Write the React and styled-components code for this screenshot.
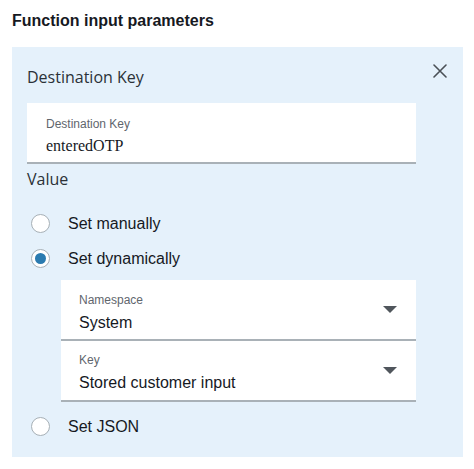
import React from "react";
import styled, { createGlobalStyle } from "styled-components";

const Global = createGlobalStyle`
  html, body { margin: 0; padding: 0; background: #ffffff; }
  body { font-family: "Liberation Sans", Arial, sans-serif; color: #16191f; }
  * { box-sizing: border-box; }
`;

const Page = styled.div`
  padding: 11px 11px 0 12px;
  width: 474px;
`;

const Title = styled.h2`
  margin: 0;
  font-family: "Liberation Sans", Arial, sans-serif;
  font-weight: 700;
  font-size: 16px;
  line-height: 19px;
  color: #16191f;
`;

const Panel = styled.section`
  margin-top: 17px;
  width: 451px;
  background: #e5f1fb;
  padding: 20px 16px 13px 15px;
  display: flex;
  flex-direction: column;
`;

const Header = styled.div`
  display: flex;
  justify-content: space-between;
  align-items: flex-start;
`;

const Heading = styled.div`
  font-family: "Open Sans", "Noto Sans", sans-serif;
  font-size: 16px;
  line-height: 20px;
  color: #2b3137;
`;

const CloseButton = styled.button`
  margin-top: -3px;
  padding: 0;
  border: 0;
  background: transparent;
  width: 14px;
  height: 14px;
  display: flex;
  cursor: pointer;
`;

const Field = styled.div`
  width: ${(p) => p.$width}px;
  height: 61px;
  background: #ffffff;
  border-bottom: 2px solid #a9b1b7;
  padding: ${(p) => p.$padTop}px 20px 0 ${(p) => p.$padLeft}px;
  margin-top: ${(p) => p.$mt || 0}px;
  position: relative;
`;

const FieldLabel = styled.div`
  font-family: "Liberation Sans", Arial, sans-serif;
  font-size: 12px;
  line-height: 14px;
  color: #5f666d;
`;

const FieldValue = styled.div`
  margin-top: ${(p) => p.$mt}px;
  font-family: ${(p) =>
    p.$serif
      ? `"Liberation Serif", "Times New Roman", serif`
      : `"Liberation Sans", Arial, sans-serif`};
  font-size: 16px;
  line-height: 19px;
  color: #16191f;
`;

const Caret = styled.svg`
  position: absolute;
  right: 19px;
  top: 50%;
  margin-top: -4px;
`;

const SectionLabel = styled(Heading)`
  margin-top: 5px;
`;

const RadioList = styled.div`
  margin-top: 17px;
  display: flex;
  flex-direction: column;
`;

const RadioRow = styled.label`
  height: 35px;
  display: flex;
  align-items: center;
  padding-left: 4px;
  margin-top: ${(p) => p.$mt || 0}px;
  font-family: "Liberation Sans", Arial, sans-serif;
  font-size: 16px;
  color: #16191f;
  cursor: pointer;
`;

const RadioCircle = styled.span`
  width: 19px;
  height: 19px;
  border-radius: 50%;
  border: 1px solid #a7b0b6;
  background: #ffffff;
  display: flex;
  align-items: center;
  justify-content: center;
  margin-right: 18px;
  flex-shrink: 0;
  &::after {
    content: "";
    width: 11px;
    height: 11px;
    border-radius: 50%;
    background: ${(p) => (p.$checked ? "#2b7bb0" : "transparent")};
  }
`;

const Nested = styled.div`
  margin-top: 4px;
  margin-left: 34px;
  display: flex;
  flex-direction: column;
`;

const CaretIcon = () => (
  <Caret width="14" height="7" viewBox="0 0 14 7">
    <path d="M0 0 L14 0 L7 7 Z" fill="#50565c" />
  </Caret>
);

const Radio = ({ checked, children, mt }) => (
  <RadioRow $mt={mt}>
    <RadioCircle $checked={checked} />
    {children}
  </RadioRow>
);

export default function App() {
  return (
    <>
      <Global />
      <Page>
        <Title>Function input parameters</Title>
        <Panel>
          <Header>
            <Heading>Destination Key</Heading>
            <CloseButton aria-label="Remove">
              <svg width="14" height="14" viewBox="0 0 14 14">
                <path
                  d="M1 1 L13 13 M13 1 L1 13"
                  stroke="#4a5056"
                  strokeWidth="1.6"
                  strokeLinecap="round"
                />
              </svg>
            </CloseButton>
          </Header>
          <Field $width={389} $padTop={14} $padLeft={19} $mt={16}>
            <FieldLabel>Destination Key</FieldLabel>
            <FieldValue $serif $mt={5}>enteredOTP</FieldValue>
          </Field>
          <SectionLabel>Value</SectionLabel>
          <RadioList>
            <Radio>Set manually</Radio>
            <Radio checked>Set dynamically</Radio>
            <Nested>
              <Field $width={355} $padTop={13} $padLeft={18}>
                <FieldLabel>Namespace</FieldLabel>
                <FieldValue $mt={6}>System</FieldValue>
                <CaretIcon />
              </Field>
              <Field $width={355} $padTop={12} $padLeft={18}>
                <FieldLabel>Key</FieldLabel>
                <FieldValue $mt={6}>Stored customer input</FieldValue>
                <CaretIcon />
              </Field>
            </Nested>
            <Radio mt={7}>Set JSON</Radio>
          </RadioList>
        </Panel>
      </Page>
    </>
  );
}
